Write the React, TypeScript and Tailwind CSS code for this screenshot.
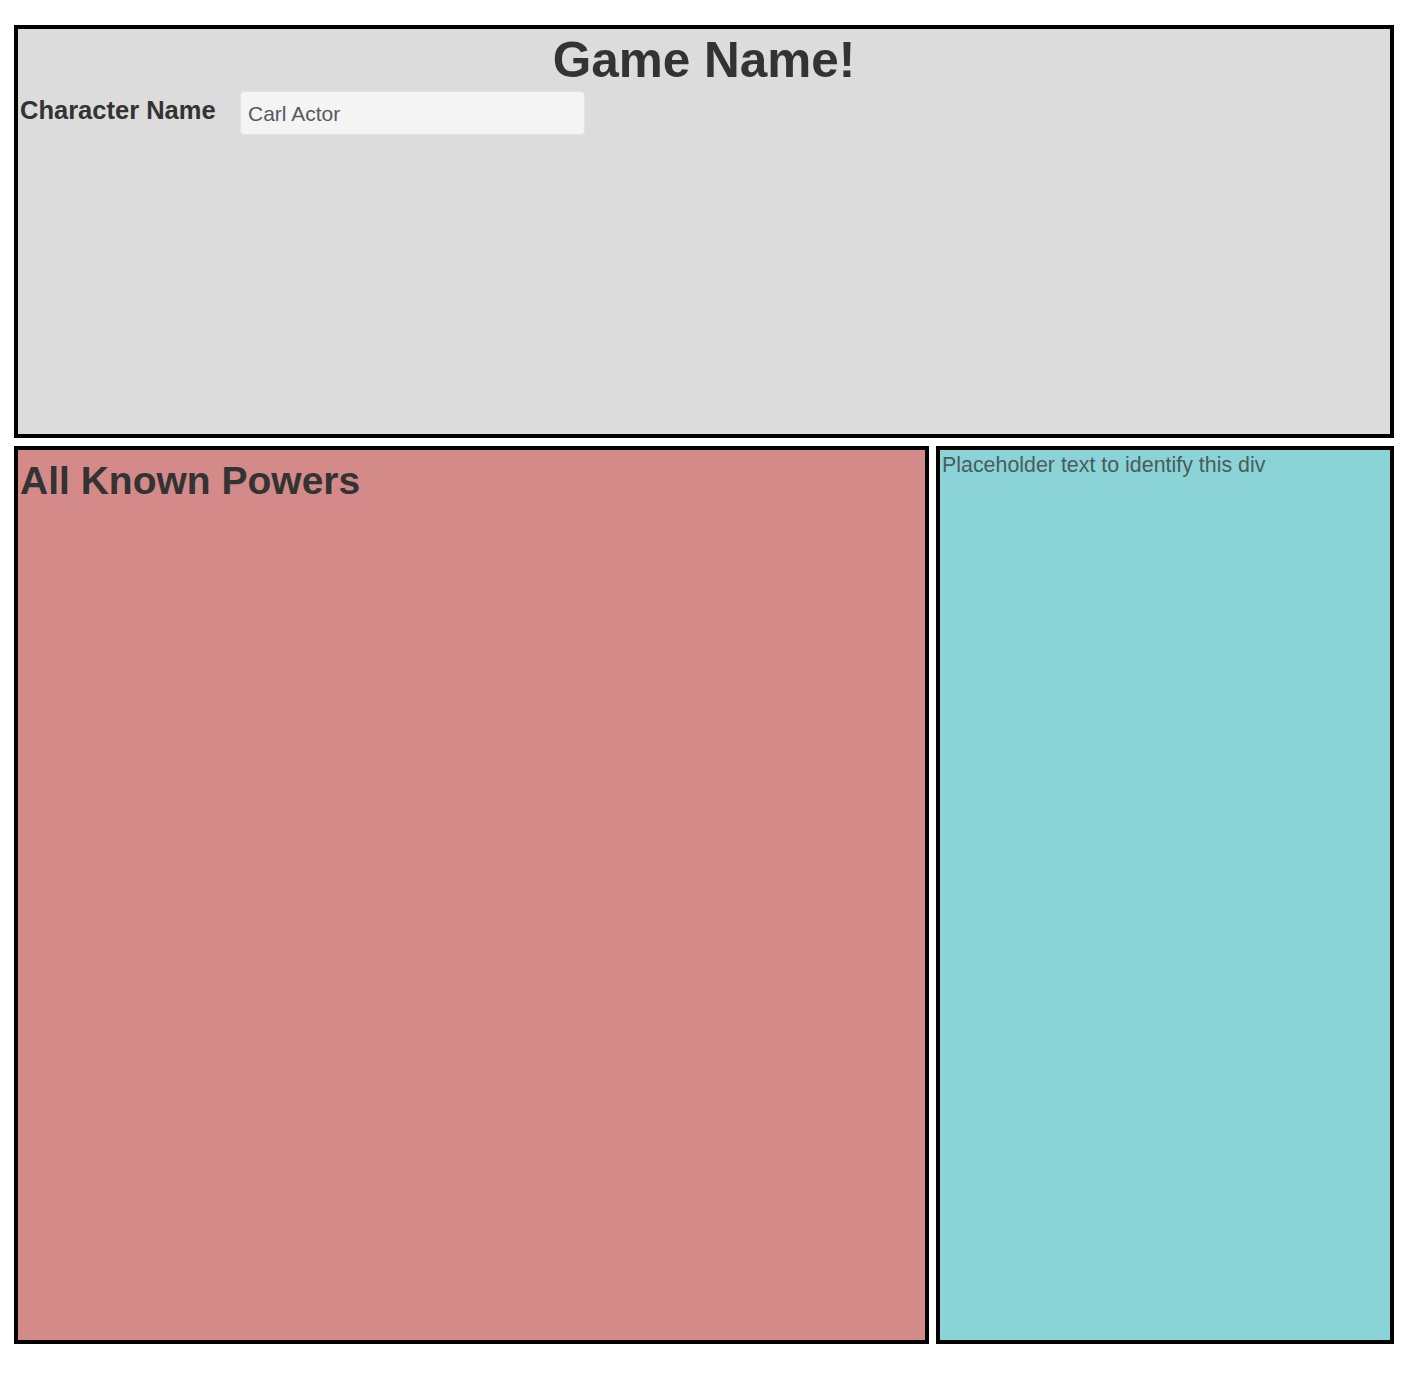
import React from "react";

const font = { fontFamily: '"Liberation Sans", Arial, sans-serif' };

export default function App() {
  return (
    <div className="min-h-screen bg-white pt-[25px] pl-[14px]" style={font}>
      <div className="flex w-[1380px] flex-col gap-[8px]">
        {/* header panel */}
        <div className="h-[413px] border-4 border-black bg-[#dcdcdc] px-[2px]">
          <h1 className="mt-[2px] text-center text-[49.5px] font-bold leading-[57px] text-[#333333]">
            Game Name!
          </h1>
          <div className="mt-[3px] flex items-start">
            <label className="w-[220px] pt-[4px] text-[25.5px] font-bold leading-[30px] text-[#333333]">
              Character Name
            </label>
            <input
              defaultValue="Carl Actor"
              className="h-[44px] w-[345px] rounded-[4px] border border-[#e2e2e2] bg-[#f4f4f4] px-[7px] pt-[2px] text-[21px] text-[#555a60] outline-none"
            />
          </div>
        </div>

        <div className="flex h-[898px] gap-[7px]">
          <div className="w-[915px] border-4 border-black bg-[#d48a89] px-[2px] pt-[8px]">
            <h2 className="text-[39px] font-bold leading-[45px] text-[#333333]">All Known Powers</h2>
          </div>
          <div className="flex-1 border-4 border-black bg-[#8ad3d6] px-[2px] pt-[3px]">
            <p className="text-[21.4px] leading-[25px] text-[#4a5c5d]">
              Placeholder text to identify this div
            </p>
          </div>
        </div>
      </div>
    </div>
  );
}
